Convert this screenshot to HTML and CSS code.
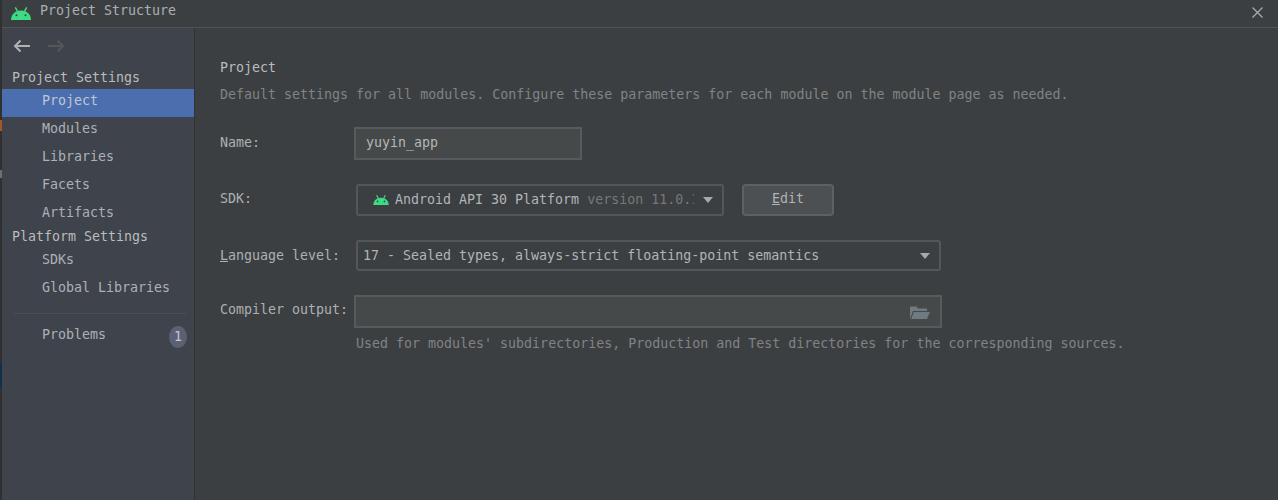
FILE: index.html
```html
<!DOCTYPE html>
<html lang="en">
<head>
<meta charset="utf-8">
<title>Project Structure</title>
<link rel="stylesheet" href="styles.css">
</head>
<body>
<div class="window">
  <div class="edge"></div>
  <div class="pane">
    <header class="titlebar">
      <svg class="logo" width="20" height="13" viewBox="0 0 20 13"><path d="M0 13C.2 7.500 4 3.600 10 3.600S19.800 7.500 20 13Z" fill="#3ddc84"/><path d="M4.300 .3 6.800 4.800M15.700 .3 13.200 4.800" stroke="#3ddc84" stroke-width="1.400" fill="none"/><circle cx="5.500" cy="8.300" r="1" fill="#3c3f41"/><circle cx="14.500" cy="8.300" r="1" fill="#3c3f41"/></svg>
      <span class="title">Project Structure</span>
      <svg class="close" width="11" height="11" viewBox="0 0 11 11"><path d="M.5.500l10 10M10.500.500l-10 10" stroke="#a9adb0" stroke-width="1.200" fill="none"/></svg>
    </header>
    <div class="body">
      <aside class="sidebar">
        <div class="nav-arrows">
          <svg width="18" height="14" viewBox="0 0 18 14"><path d="M17 7H2M7.500 1.500 2 7l5.500 5.500" stroke="#afb1b3" stroke-width="2" fill="none"/></svg>
          <svg width="18" height="14" viewBox="0 0 18 14"><path d="M1 7h15M10.500 1.500 16 7l-5.500 5.500" stroke="#55585a" stroke-width="2" fill="none"/></svg>
        </div>
        <div class="group first">Project Settings</div>
        <div class="item selected">Project</div>
        <div class="item">Modules</div>
        <div class="item">Libraries</div>
        <div class="item">Facets</div>
        <div class="item">Artifacts</div>
        <div class="group">Platform Settings</div>
        <div class="item">SDKs</div>
        <div class="item">Global Libraries</div>
        <div class="divider"></div>
        <div class="item problems">Problems<span class="badge">1</span></div>
      </aside>
      <main class="content">
        <h1 class="heading">Project</h1>
        <p class="desc">Default settings for all modules. Configure these parameters for each module on the module page as needed.</p>
        <div class="form">
          <label class="label low">Name:</label>
          <div class="control"><div class="input name">yuyin_app</div></div>

          <label class="label">SDK:</label>
          <div class="control sdk-row">
            <div class="combo sdk">
              <svg class="logo-small" width="16" height="10" viewBox="0 0 20 13"><path d="M0 13C.2 7.500 4 3.600 10 3.600S19.800 7.500 20 13Z" fill="#3ddc84"/><path d="M4.300 .3 6.800 4.800M15.700 .3 13.200 4.800" stroke="#3ddc84" stroke-width="1.500" fill="none"/><circle cx="5.500" cy="8.300" r="1.100" fill="#3c3f41"/><circle cx="14.500" cy="8.300" r="1.100" fill="#3c3f41"/></svg>
              <span class="combo-text">Android API 30 Platform <span class="muted">version 11.0.1</span></span>
              <span class="caret"></span>
            </div>
            <div class="button"><span class="mnemonic">E</span>dit</div>
          </div>

          <label class="label low"><span class="mnemonic">L</span>anguage level:</label>
          <div class="control">
            <div class="combo lang">
              <span class="combo-text">17 - Sealed types, always-strict floating-point semantics</span>
              <span class="caret"></span>
            </div>
          </div>

          <label class="label">Compiler output:</label>
          <div class="control">
            <div class="input output">
              <svg class="folder" width="20" height="14" viewBox="0 0 20 14"><path d="M0 2V14L3 6H17V3.500H8L6.500 1.500H1Z" fill="#6f7b81"/><path d="M3.800 7H20L17 14H1.200Z" fill="#6f7b81"/></svg>
            </div>
          </div>
        </div>
        <p class="hint">Used for modules' subdirectories, Production and Test directories for the corresponding sources.</p>
      </main>
    </div>
  </div>
</div>
</body>
</html>
```

FILE: styles.css
```css
* { box-sizing: border-box; }
html, body { margin: 0; height: 100%; overflow: hidden; }
body {
  background: #3c3f41;
  color: #bbbbbb;
  font-family: "DejaVu Sans Mono", "Liberation Mono", monospace;
  font-size: 13.3px;
  line-height: 16px;
}
.window { height: 500px; display: flex; }
.edge {
  width: 2px;
  flex: none;
  background: linear-gradient(to bottom,
    #2f3133 0, #2f3133 120px,
    #a8552a 120px, #a8552a 131px,
    #2f3133 131px, #2f3133 170px,
    #6d7073 170px, #6d7073 178px,
    #2f3133 178px, #2f3133 363px,
    #12304a 363px, #12304a 388px,
    #2f3133 388px);
}
.pane { flex: 1; min-width: 0; display: flex; flex-direction: column; }
.titlebar {
  height: 28px;
  flex: none;
  display: flex;
  align-items: flex-start;
  padding: 0 15px 0 9px;
  gap: 9px;
  border-bottom: 1px solid #515355;
}
.logo { margin-top: 7px; flex: none; }
.title { flex: 1; color: #a9b0b5; margin-top: 3px; }
.close { margin-top: 7px; flex: none; }
.body { flex: 1; display: flex; background: #3c3f41; min-height: 0; }
.sidebar {
  width: 193px;
  flex: none;
  background: #3e434c;
  border-right: 1px solid #323232;
  display: flex;
  flex-direction: column;
}
.nav-arrows { height: 37px; display: flex; align-items: center; gap: 16px; padding: 0 0 2px 11px; flex: none; }
.group { padding-left: 10px; height: 16px; flex: none; color: #bbbbbb; }
.group.first { margin-top: 5px; }
.item { height: 28px; flex: none; padding: 0 0 4px 40px; display: flex; align-items: center; color: #adb1b6; }
.item.selected { background: #4b6eaf; color: #c0c6d3; margin-top: 3px; }
.group + .item:not(.selected) { margin-top: 3px; }
.divider { height: 1px; flex: none; background: #4c4f53; margin: 9px 8px 9px 12px; }
.problems { position: relative; }
.badge {
  position: absolute;
  right: 7px;
  top: 3px;
  width: 18px;
  height: 22px;
  border-radius: 50%;
  background: #5a6175;
  color: #c3c7cf;
  display: flex;
  align-items: center;
  justify-content: center;
}
.content { flex: 1; padding: 32px 0 0 25px; min-width: 0; }
.heading { margin: 0; font: inherit; color: #b9bcbf; height: 16px; }
.desc { margin: 11px 0 0; color: #808385; white-space: nowrap; height: 16px; }
.form {
  margin-top: 24px;
  display: grid;
  grid-template-columns: 134px 1fr;
  grid-template-rows: 33px 32px 31px 33px;
  row-gap: 24px;
  align-items: start;
}
.label { color: #adb0b2; line-height: 16px; padding-top: 7px; white-space: nowrap; }
.label.low { padding-top: 8px; }
.control { min-width: 0; }
.input {
  height: 33px;
  background: #45494a;
  border: 2px solid #575b5d;
  display: flex;
  align-items: center;
  color: #b4b7b9;
}
.name { width: 228px; padding: 0 0 2px 10px; }
.output { width: 588px; justify-content: flex-end; padding-right: 10px; }
.sdk-row { display: flex; gap: 18px; align-items: flex-start; padding-left: 2px; }
.combo {
  height: 32px;
  border: 2px solid #54575a;
  border-radius: 3px;
  display: flex;
  align-items: center;
  background: #3c3f41;
  color: #b0b5b8;
  white-space: nowrap;
}
.sdk { width: 368px; padding: 0 9px 0 15px; }
.logo-small { flex: none; margin: 0 6px 0 0; }
.lang { width: 585px; height: 31px; margin-left: 2px; padding: 0 9px 0 5px; }
.combo-text { flex: 1; min-width: 0; overflow: hidden; }
.caret {
  flex: none;
  width: 0;
  height: 0;
  margin-left: 9px;
  border-left: 5.5px solid transparent;
  border-right: 5.5px solid transparent;
  border-top: 6px solid #a7a9ab;
}
.muted { color: #75787a; }
.button {
  width: 92px;
  height: 32px;
  background: #4c5052;
  border: 2px solid #5e6163;
  border-radius: 4px;
  display: flex;
  align-items: center;
  justify-content: center;
  color: #b0b3b5;
  padding-bottom: 3px;
}
.mnemonic { text-decoration: underline; }
.hint { margin: 8px 0 0 136px; color: #808385; white-space: nowrap; height: 16px; }
```
